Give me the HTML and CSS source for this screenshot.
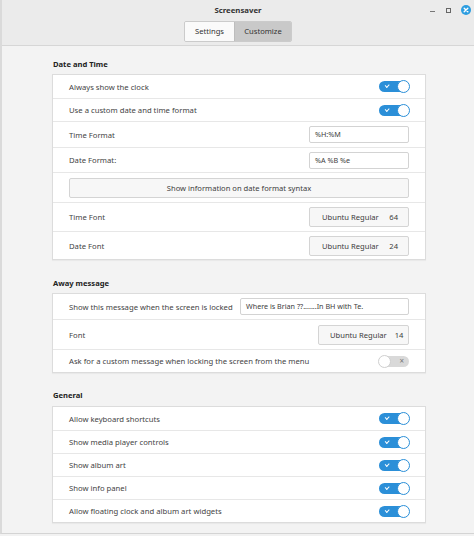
FILE: index.html
```html
<!DOCTYPE html>
<html>
<head>
<meta charset="utf-8">
<link rel="stylesheet" href="styles.css">
</head>
<body>
<div class="window">
  <header class="titlebar">
    <div class="title">Screensaver</div>
    <div class="wm">
      <span class="wm-min"></span>
      <span class="wm-max"></span>
      <span class="wm-close">
        <svg width="10" height="10" viewBox="0 0 10 10"><circle cx="5" cy="5" r="5" fill="#2c9de0"/><path d="M3.2 3.2 L6.8 6.8 M6.8 3.2 L3.2 6.8" stroke="#fff" stroke-width="1.4" stroke-linecap="round"/></svg>
      </span>
    </div>
    <div class="tabs">
      <span class="tab">Settings</span>
      <span class="tab active">Customize</span>
    </div>
  </header>

  <main class="content">
    <section class="section">
      <h2 class="section-title">Date and Time</h2>
      <div class="card">
        <div class="row h23"><span class="label">Always show the clock</span><span class="switch on"><span class="tick"></span><span class="knob"></span></span></div>
        <div class="row h23"><span class="label">Use a custom date and time format</span><span class="switch on"><span class="tick"></span><span class="knob"></span></span></div>
        <div class="row h26"><span class="label">Time Format</span><span class="entry w100">%H:%M</span></div>
        <div class="row h25"><span class="label">Date Format:</span><span class="entry w100">%A %B %e</span></div>
        <div class="row h30"><span class="wide-btn">Show information on date format syntax</span></div>
        <div class="row h29"><span class="label">Time Font</span><span class="font-btn w100"><span>Ubuntu Regular</span><span class="size">64</span></span></div>
        <div class="row h28"><span class="label">Date Font</span><span class="font-btn w100"><span>Ubuntu Regular</span><span class="size">24</span></span></div>
      </div>
    </section>

    <section class="section">
      <h2 class="section-title">Away message</h2>
      <div class="card">
        <div class="row h25"><span class="label">Show this message when the screen is locked</span><span class="entry w169">Where is Brian ??.......In BH with Te.</span></div>
        <div class="row h30"><span class="label">Font</span><span class="font-btn w91"><span>Ubuntu Regular</span><span class="size">14</span></span></div>
        <div class="row h23"><span class="label">Ask for a custom message when locking the screen from the menu</span><span class="switch off"><span class="knob"></span><span class="cross">×</span></span></div>
      </div>
    </section>

    <section class="section">
      <h2 class="section-title">General</h2>
      <div class="card">
        <div class="row h23"><span class="label">Allow keyboard shortcuts</span><span class="switch on"><span class="tick"></span><span class="knob"></span></span></div>
        <div class="row h23"><span class="label">Show media player controls</span><span class="switch on"><span class="tick"></span><span class="knob"></span></span></div>
        <div class="row h23"><span class="label">Show album art</span><span class="switch on"><span class="tick"></span><span class="knob"></span></span></div>
        <div class="row h23"><span class="label">Show info panel</span><span class="switch on"><span class="tick"></span><span class="knob"></span></span></div>
        <div class="row h23"><span class="label">Allow floating clock and album art widgets</span><span class="switch on"><span class="tick"></span><span class="knob"></span></span></div>
      </div>
    </section>
  </main>
</div>
</body>
</html>
```

FILE: styles.css
```css
* { box-sizing: border-box; }
html, body { margin: 0; padding: 0; }
body {
  width: 474px;
  height: 536px;
  overflow: hidden;
  font-family: "Noto Sans", "Open Sans", sans-serif;
  color: #3d3d3d;
  background: #f2f2f2;
}
.window {
  width: 474px;
  height: 534px;
  background: #f3f3f3;
  border-left: 2px solid #dadada;
  border-bottom: 1px solid #d4d4d4;
  display: flex;
  flex-direction: column;
}
.titlebar {
  position: relative;
  height: 46px;
  background: #ebebeb;
  border-bottom: 1px solid #d6d6d6;
  display: flex;
  flex-direction: column;
  align-items: center;
}
.title {
  margin-top: 3px;
  font-size: 7.8px;
  font-weight: 700;
  line-height: 14px;
  color: #333;
}
.wm {
  position: absolute;
  top: 5px;
  right: 3px;
  display: flex;
  align-items: center;
}
.wm-min {
  width: 5px;
  height: 1px;
  background: #777;
  margin-top: 3px;
  margin-right: 11px;
}
.wm-max {
  width: 5px;
  height: 5px;
  border: 1px solid #666;
  margin-right: 10px;
}
.wm-close { display: block; width: 10px; height: 10px; }
.wm-close svg { display: block; }
.tabs {
  margin-top: 4px;
  display: flex;
  border: 1px solid #cbcbcb;
  border-radius: 2px;
  overflow: hidden;
}
.tab {
  height: 19px;
  line-height: 19px;
  font-size: 7.6px;
  background: #fafafa;
  color: #333;
  text-align: center;
}
.tab:first-child { width: 49px; }
.tab.active {
  width: 57px;
  background: #c9c9c9;
  border-left: 1px solid #bdbdbd;
}
.content {
  padding: 0 48px 0 50px;
}
.section-title {
  margin: 0;
  font-size: 7.6px;
  font-weight: 700;
  color: #222;
  height: 28px;
  line-height: 10px;
  padding-top: 13px;
  padding-left: 1px;
}
.section:nth-child(2) .section-title {
  height: 33px;
  padding-top: 18px;
}
.section:nth-child(3) .section-title {
  height: 33px;
  padding-top: 17px;
}
.card {
  width: 374px;
  background: #fff;
  border: 1px solid #dcdcdc;
  box-shadow: 0 1px 1px rgba(0,0,0,0.04);
}
.row {
  display: flex;
  align-items: center;
  justify-content: space-between;
  padding: 0 16px;
  border-top: 1px solid #e7e7e7;
}
.row:first-child { border-top: none; }
.h23 { height: 23px; }
.h25 { height: 25px; }
.h26 { height: 26px; }
.h28 { height: 28px; }
.h29 { height: 29px; }
.h30 { height: 30px; }
.label {
  font-size: 7.7px;
  color: #444;
  white-space: nowrap;
}
.entry {
  height: 17px;
  line-height: 15px;
  font-size: 7.2px;
  padding: 0 5px;
  background: #fff;
  border: 1px solid #d3d3d3;
  border-radius: 2px;
  color: #3d3d3d;
  white-space: nowrap;
  overflow: hidden;
}
.w100 { width: 100px; }
.w169 { width: 169px; }
.w91 { width: 91px; }
.font-btn {
  height: 20px;
  display: flex;
  align-items: center;
  justify-content: space-between;
  padding: 0 10px 0 12px;
  font-size: 7.6px;
  background: #f7f7f7;
  border: 1px solid #d4d4d4;
  border-radius: 2px;
  color: #3d3d3d;
  white-space: nowrap;
}
.w91.font-btn { padding: 0 8px 0 11px; }
.size { margin-left: 8px; }
.wide-btn {
  flex: 1;
  height: 20px;
  line-height: 18px;
  text-align: center;
  font-size: 7.6px;
  background: #f7f7f7;
  border: 1px solid #d4d4d4;
  border-radius: 2px;
  color: #3d3d3d;
}
.switch {
  position: relative;
  width: 30px;
  height: 11px;
  border-radius: 6px;
  display: flex;
  align-items: center;
}
.switch.on { background: #2b8fd8; }
.switch.off { background: #d9d9d9; }
.switch .knob {
  position: absolute;
  top: -1px;
  width: 13px;
  height: 13px;
  border-radius: 50%;
  background: #fff;
  border: 1px solid #d5d5d5;
}
.switch.on .knob { right: -1px; border-color: #2b8fd8; }
.switch.off .knob { left: -1px; border-color: #cfcfcf; }
.tick {
  position: absolute;
  left: 6px;
  top: 3px;
  width: 4px;
  height: 2.5px;
  border-left: 1px solid #fff;
  border-bottom: 1px solid #fff;
  transform: rotate(-45deg);
}
.cross {
  position: absolute;
  right: 5px;
  top: -1px;
  font-size: 8px;
  line-height: 12px;
  color: #777;
}
```
